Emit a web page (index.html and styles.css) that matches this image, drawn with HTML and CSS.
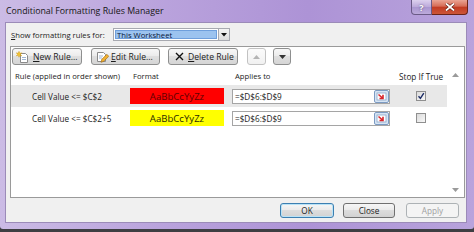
FILE: index.html
```html
<!DOCTYPE html>
<html>
<head>
<meta charset="utf-8">
<link rel="stylesheet" href="styles.css">
</head>
<body>
<div class="window">
  <div class="titlebar">
    <span class="title">Conditional Formatting Rules Manager</span>
    <div class="caption">
      <div class="cap help">?</div>
      <div class="cap close"><svg width="10" height="8" viewBox="0 0 10 8"><path d="M1 0.5L9 7.5M9 0.5L1 7.5" stroke="#5a1a10" stroke-width="3"/><path d="M1 0.5L9 7.5M9 0.5L1 7.5" stroke="#fff" stroke-width="1.8"/></svg></div>
    </div>
  </div>
  <div class="content">
    <div class="showrow">
      <span class="label"><u>S</u>how formatting rules for:</span>
      <div class="combo">
        <span class="sel">This Worksheet</span>
        <span class="drop"><svg width="6" height="4" viewBox="0 0 6 4"><path d="M0 0H6L3 3.5Z" fill="#111"/></svg></span>
      </div>
    </div>
    <div class="panel">
      <div class="toolbar">
        <button class="btn b-new"><svg width="13" height="12" viewBox="0 0 13 12"><path d="M4.5 2.5h5l2 2v7h-7z" fill="#fff" stroke="#8a8a8a"/><path d="M6 6.5h4M6 8.5h4" stroke="#9fb5d3"/><path d="M3 0.3l0.8 2 2-0.5-1.5 1.5 1.5 1.5-2-0.5-0.8 2-0.8-2-2 0.5 1.5-1.5-1.5-1.5 2 0.5z" fill="#f6c82e" stroke="#c98a00" stroke-width="0.4"/></svg><span><u>N</u>ew Rule...</span></button>
        <button class="btn b-edit"><svg width="13" height="12" viewBox="0 0 13 12"><path d="M1.5 1.5h6l2 2v7h-8z" fill="#fff" stroke="#8a8a8a"/><path d="M3 5h4M3 7h3" stroke="#9fb5d3"/><path d="M5 11.3l0.8-3 5-5 2 2-5 5z" fill="#f0b030" stroke="#9a6410" stroke-width="0.6"/></svg><span><u>E</u>dit Rule...</span></button>
        <button class="btn b-del"><svg width="9" height="9" viewBox="0 0 9 9"><path d="M1 1L8 8M8 1L1 8" stroke="#111" stroke-width="1.4"/></svg><span><u>D</u>elete Rule</span></button>
        <button class="btn b-up"><svg width="7" height="4" viewBox="0 0 7 4"><path d="M0 4H7L3.5 0Z" fill="#b4b4b4"/></svg></button>
        <button class="btn b-down"><svg width="7" height="4" viewBox="0 0 7 4"><path d="M0 0H7L3.5 4Z" fill="#333"/></svg></button>
      </div>
      <div class="list">
        <div class="grid">
          <div class="hd h-rule">Rule (applied in order shown)</div>
          <div class="hd h-format">Format</div>
          <div class="hd h-applies">Applies to</div>
          <div class="hd h-stop">Stop If True</div>

          <div class="cell c-rule sel-row">Cell Value &lt;= $C$2</div>
          <div class="cell c-format sel-row"><div class="preview red">AaBbCcYyZz</div></div>
          <div class="cell c-applies sel-row"><div class="range"><span>=$D$6:$D$9</span><span class="rbtn"><svg width="15" height="13" viewBox="0 0 15 13"><rect x="0.5" y="0.5" width="14" height="12" rx="1.5" fill="#d6e4f4" stroke="#7c9bc3"/><rect x="3" y="3" width="9" height="7" fill="#fff" stroke="#8aa5c8" stroke-width="0.8"/><path d="M4.5 4.5L8.5 8M9 4.8V8.5H5.5" stroke="#d8262c" stroke-width="1.6" fill="none"/></svg></span></div></div>
          <div class="cell c-stop sel-row"><span class="chk"><svg width="8" height="8" viewBox="0 0 8 8"><path d="M1.5 4.3L3.4 6.3L6.8 1.2" stroke="#1e2d66" stroke-width="1.4" fill="none"/></svg></span></div>

          <div class="cell c-rule">Cell Value &lt;= $C$2+5</div>
          <div class="cell c-format"><div class="preview yellow">AaBbCcYyZz</div></div>
          <div class="cell c-applies"><div class="range"><span>=$D$6:$D$9</span><span class="rbtn"><svg width="15" height="13" viewBox="0 0 15 13"><rect x="0.5" y="0.5" width="14" height="12" rx="1.5" fill="#d6e4f4" stroke="#7c9bc3"/><rect x="3" y="3" width="9" height="7" fill="#fff" stroke="#8aa5c8" stroke-width="0.8"/><path d="M4.5 4.5L8.5 8M9 4.8V8.5H5.5" stroke="#d8262c" stroke-width="1.6" fill="none"/></svg></span></div></div>
          <div class="cell c-stop"><span class="chk"></span></div>
        </div>
        <div class="vscroll">
          <svg width="7" height="4" viewBox="0 0 7 4"><path d="M0 4H7L3.5 0Z" fill="#9a9a9a"/></svg>
          <svg width="7" height="4" viewBox="0 0 7 4"><path d="M0 0H7L3.5 4Z" fill="#9a9a9a"/></svg>
        </div>
      </div>
    </div>
    <div class="footer">
      <button class="fbtn ok">OK</button>
      <button class="fbtn cls">Close</button>
      <button class="fbtn apply">Apply</button>
    </div>
  </div>
</div>
</body>
</html>
```
FILE: styles.css
```css
* { box-sizing: border-box; margin: 0; padding: 0; }
html, body { width: 474px; height: 232px; overflow: hidden; }
body {
  background: #3e3e42;
  font-family: "Open Sans", "Noto Sans", sans-serif;
  font-size: 8.2px;
  color: #1c1c1c;
}
.window {
  width: 474px;
  height: 229px;
  padding: 0 7px 6px 5px;
  display: flex;
  flex-direction: column;
  background: linear-gradient(90deg, #cbbbe5 0%, #b9a2dc 35%, #ad93d6 65%, #b8a3dc 100%);
  border-radius: 0 0 3px 3px;
}
.titlebar {
  height: 22px;
  display: flex;
  justify-content: space-between;
  align-items: flex-start;
}
.title {
  font-size: 8.8px;
  line-height: 22px;
  padding-left: 1px;
  color: #151515;
}
.caption { display: flex; margin-right: -1px; }
.cap {
  height: 15px;
  display: flex;
  align-items: center;
  justify-content: center;
  border: 1px solid #6a5a86;
  border-top: none;
}
.help {
  width: 21px;
  border-radius: 0 0 0 4px;
  background: linear-gradient(#dcd0ee, #bba9da 50%, #a996d0 51%, #bcaadb);
  color: #fff;
  font-weight: bold;
  font-size: 9px;
  text-shadow: 0 0 2px #4a3d66;
}
.close {
  width: 36px;
  border-left: none;
  border-color: #6b2418;
  border-radius: 0 0 4px 0;
  background: linear-gradient(#eaa494, #d66c56 45%, #c23a22 50%, #cc5638 100%);
}
.content {
  flex: 1;
  background: #f0f0f0;
  border: 1px solid #9b8bb8;
  display: flex;
  flex-direction: column;
}
.showrow {
  height: 23px;
  display: flex;
  align-items: center;
  padding-left: 5px;
}
.label { width: 102px; font-size: 7.7px; }
.combo {
  width: 117px;
  height: 13px;
  border: 1px solid #a7a9b0;
  background: #fff;
  display: flex;
  padding: 1px;
}
.sel {
  flex: 1;
  background: #9cc3ef;
  border: 1px solid #6f9fdc;
  font-size: 7.7px;
  line-height: 9px;
  padding-left: 1px;
  color: #08163a;
}
.drop {
  width: 11px;
  margin: -1px -1px -1px 1px;
  border-left: 1px solid #a7a9b0;
  background: linear-gradient(#f4f4f4, #dcdcdc);
  display: flex;
  align-items: center;
  justify-content: center;
}
.panel {
  height: 152px;
  margin: 0 1px 0 4px;
  border: 1px solid #9a9a9a;
  background: #fff;
  display: flex;
  flex-direction: column;
}
.toolbar {
  height: 20px;
  display: flex;
  align-items: flex-start;
  padding: 1px 0 0 1px;
}
.btn {
  height: 17px;
  border: 1px solid #8e8f8f;
  border-radius: 3px;
  background: linear-gradient(#f7f7f7, #ececec 45%, #dfdfdf 50%, #d5d5d5);
  display: flex;
  align-items: center;
  font-family: inherit;
  font-size: 8.6px;
  color: #1c1c1c;
}
.b-new { width: 70px; padding-left: 3px; gap: 4px; }
.b-edit { width: 69px; margin-left: 9px; padding-left: 4px; gap: 2px; }
.b-del { width: 70px; margin-left: 8px; padding-left: 6px; gap: 4px; }
.b-up {
  width: 19px; margin-left: 9px; justify-content: center;
  border-color: #c2c2c2;
  background: linear-gradient(#fbfbfb, #f1f1f1);
}
.b-down { width: 18px; margin-left: 7px; justify-content: center; }
.list { flex: 1; display: flex; }
.grid {
  width: 436px;
  display: grid;
  grid-template-columns: 117px 100px 167px 52px;
  grid-template-rows: 18px 22px 22px;
  align-content: start;
}
.hd { display: flex; align-items: center; font-size: 7.7px; }
.h-rule { padding-left: 4px; }
.h-format { padding-left: 5px; }
.h-applies { padding-left: 7px; }
.h-stop { padding-left: 4px; font-size: 8.2px; }
.cell { display: flex; align-items: center; }
.sel-row { background: #e8e8e8; }
.c-rule { padding-left: 21px; }
.c-format { padding-left: 2px; }
.preview {
  width: 94px;
  height: 16px;
  display: flex;
  align-items: center;
  justify-content: center;
  font-size: 9.6px;
}
.red { background: #ff0000; color: #5e0000; }
.yellow { background: #ffff00; color: #2a2a00; }
.c-applies { padding-left: 4px; }
.range {
  width: 158px;
  height: 15px;
  border: 1px solid #a5a5a5;
  background: #fff;
  display: flex;
  align-items: center;
  padding-left: 2px;
}
.rbtn { margin-left: auto; display: flex; }
.c-stop { justify-content: center; }
.chk {
  width: 10px;
  height: 10px;
  border: 1px solid #8f8f8f;
  background: linear-gradient(135deg, #dadada, #f8f8f8);
  display: flex;
  align-items: center;
  justify-content: center;
}
.vscroll {
  flex: 1;
  display: flex;
  flex-direction: column;
  justify-content: space-between;
  align-items: center;
  padding: 6px 0 5px;
}
.footer {
  flex: 1;
  display: flex;
  justify-content: flex-end;
  align-items: flex-start;
  padding: 5px 7px 0 0;
}
.fbtn {
  height: 15px;
  border: 1px solid #707070;
  border-radius: 3px;
  background: linear-gradient(#f6f6f6, #ebebeb 45%, #dddddd 50%, #d2d2d2);
  font-family: inherit;
  font-size: 8.2px;
  color: #1c1c1c;
}
.ok {
  width: 54px; margin-right: 9px;
  border-color: #3c7fb1;
  box-shadow: inset 0 0 0 1px #b9e3f7;
}
.cls { width: 52px; margin-right: 11px; }
.apply {
  width: 53px;
  border-color: #adb2b5;
  background: #f4f4f4;
  color: #a0a0a0;
}
```
